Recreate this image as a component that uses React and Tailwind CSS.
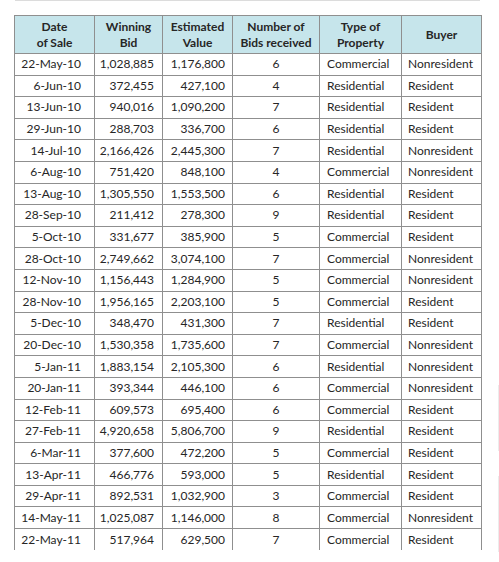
import React from "react";

const rows = [
  ["22-May-10", "1,028,885", "1,176,800", "6", "Commercial", "Nonresident"],
  ["6-Jun-10", "372,455", "427,100", "4", "Residential", "Resident"],
  ["13-Jun-10", "940,016", "1,090,200", "7", "Residential", "Resident"],
  ["29-Jun-10", "288,703", "336,700", "6", "Residential", "Resident"],
  ["14-Jul-10", "2,166,426", "2,445,300", "7", "Residential", "Nonresident"],
  ["6-Aug-10", "751,420", "848,100", "4", "Commercial", "Nonresident"],
  ["13-Aug-10", "1,305,550", "1,553,500", "6", "Residential", "Resident"],
  ["28-Sep-10", "211,412", "278,300", "9", "Residential", "Resident"],
  ["5-Oct-10", "331,677", "385,900", "5", "Commercial", "Resident"],
  ["28-Oct-10", "2,749,662", "3,074,100", "7", "Commercial", "Nonresident"],
  ["12-Nov-10", "1,156,443", "1,284,900", "5", "Commercial", "Nonresident"],
  ["28-Nov-10", "1,956,165", "2,203,100", "5", "Commercial", "Resident"],
  ["5-Dec-10", "348,470", "431,300", "7", "Residential", "Resident"],
  ["20-Dec-10", "1,530,358", "1,735,600", "7", "Commercial", "Nonresident"],
  ["5-Jan-11", "1,883,154", "2,105,300", "6", "Residential", "Nonresident"],
  ["20-Jan-11", "393,344", "446,100", "6", "Commercial", "Nonresident"],
  ["12-Feb-11", "609,573", "695,400", "6", "Commercial", "Resident"],
  ["27-Feb-11", "4,920,658", "5,806,700", "9", "Residential", "Resident"],
  ["6-Mar-11", "377,600", "472,200", "5", "Commercial", "Resident"],
  ["13-Apr-11", "466,776", "593,000", "5", "Residential", "Resident"],
  ["29-Apr-11", "892,531", "1,032,900", "3", "Commercial", "Resident"],
  ["14-May-11", "1,025,087", "1,146,000", "8", "Commercial", "Nonresident"],
  ["22-May-11", "517,964", "629,500", "7", "Commercial", "Resident"],
];

// header labels split on two lines
const headers = [
  ["Date", "of Sale"],
  ["Winning", "Bid"],
  ["Estimated", "Value"],
  ["Number of", "Bids received"],
  ["Type of", "Property"],
  ["Buyer"],
];

const colWidths = ["w-[80px]", "w-[68px]", "w-[70px]", "w-[87px]", "w-[82px]", "w-[80px]"];
const cellAlign = [
  "text-right pr-[13px]",
  "text-right pr-[8px]",
  "text-right pr-[7px]",
  "text-center",
  "text-left pl-[7px]",
  "text-left pl-[6px]",
];

const App = () => {
  return (
    <div
      className="w-[499px] h-[562px] bg-white overflow-hidden flex text-[#262626]"
      style={{ fontFamily: "Lato, 'Open Sans', sans-serif" }}
    >
      <div className="flex flex-col">
        {/* thin rule above table */}
        <div className="ml-[15px] w-[465px] h-px bg-[#dcdcdc]" />

        <table className="ml-[14px] mt-[14px] border-collapse table-fixed w-[467px] text-[12px]">
          <colgroup>
            {colWidths.map((w, i) => (
              <col key={i} className={w} />
            ))}
          </colgroup>
          <thead>
            <tr className="h-[38px] bg-[#c6e5eb]">
              {headers.map((h, i) => (
                <th
                  key={i}
                  className="border border-[#8f8f8f] font-bold text-center leading-[16px] p-0 text-[#262626]"
                >
                  {h.map((line, j) => (
                    <div key={j}>{line}</div>
                  ))}
                </th>
              ))}
            </tr>
          </thead>
          <tbody>
            {rows.map((r, i) => (
              <tr key={i} className="h-[21.6px]">
                {r.map((c, j) => (
                  <td
                    key={j}
                    className={`border-x border-[#8f8f8f] p-0 leading-[14px] whitespace-nowrap ${
                      i < rows.length - 1 ? "border-b" : ""
                    } ${cellAlign[j]}`}
                  >
                    {c}
                  </td>
                ))}
              </tr>
            ))}
          </tbody>
        </table>
      </div>

      {/* faint marks along the right edge */}
      <div className="ml-auto flex flex-col">
        <div className="mt-[385px] w-px h-[66px] bg-[#ececec]" />
        <div className="mt-[25px] w-px h-[76px] bg-[#ececec]" />
      </div>
    </div>
  );
};

export default App;
